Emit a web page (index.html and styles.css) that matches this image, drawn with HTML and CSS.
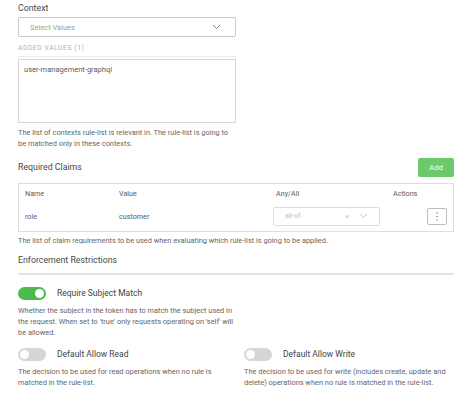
FILE: index.html
```html
<!DOCTYPE html>
<html>
<head>
<meta charset="utf-8">
<link rel="stylesheet" href="styles.css">
</head>
<body>
<div class="page">
  <div class="field-label ctx-label">Context</div>
  <div class="select">
    <span class="placeholder">Select Values</span>
    <svg class="chev" width="9" height="6" viewBox="0 0 9 6"><path d="M1 1l3.5 3.5L8 1" fill="none" stroke="#888" stroke-width="1"/></svg>
  </div>
  <div class="added-label">ADDED VALUES (1)</div>
  <div class="values-box">user-management-graphql</div>
  <p class="desc">The list of contexts rule-list is relevant in. The rule-list is going to be matched only in these contexts.</p>

  <div class="section-head">
    <div class="field-label claims-label">Required Claims</div>
    <button class="btn-add">Add</button>
  </div>
  <div class="claims">
    <div class="th c1">Name</div>
    <div class="th c2">Value</div>
    <div class="th c3">Any/All</div>
    <div class="th c4">Actions</div>
    <div class="td c1">role</div>
    <div class="td c2">customer</div>
    <div class="td c3">
      <div class="mini-select">
        <span class="mini-ph">all-of</span>
        <span class="mini-x">×</span>
        <svg class="mini-chev" width="9" height="6" viewBox="0 0 9 6"><path d="M1 1l3.5 3.5L8 1" fill="none" stroke="#c4c4c4" stroke-width="1"/></svg>
      </div>
    </div>
    <div class="td c4">
      <button class="kebab"><svg width="2" height="9" viewBox="0 0 2 9"><circle cx="1" cy="1" r="0.8" fill="#888"/><circle cx="1" cy="4.5" r="0.8" fill="#888"/><circle cx="1" cy="8" r="0.8" fill="#888"/></svg></button>
    </div>
  </div>
  <p class="desc claims-desc">The list of claim requirements to be used when evaluating which rule-list is going to be applied.</p>

  <div class="field-label enf-label">Enforcement Restrictions</div>
  <div class="rule"></div>

  <div class="toggles">
    <div class="toggle-cell">
      <div class="toggle-row">
        <span class="switch on"><span class="knob"></span></span>
        <span class="toggle-label">Require Subject Match</span>
      </div>
      <p class="desc">Whether the subject in the token has to match the subject used in the request. When set to 'true' only requests operating on 'self' will be allowed.</p>
    </div>
    <div class="toggle-cell"></div>
    <div class="toggle-cell">
      <div class="toggle-row">
        <span class="switch"><span class="knob"></span></span>
        <span class="toggle-label">Default Allow Read</span>
      </div>
      <p class="desc">The decision to be used for read operations when no rule is matched in the rule-list.</p>
    </div>
    <div class="toggle-cell">
      <div class="toggle-row">
        <span class="switch"><span class="knob"></span></span>
        <span class="toggle-label">Default Allow Write</span>
      </div>
      <p class="desc">The decision to be used for write (includes create, update and delete) operations when no rule is matched in the rule-list.</p>
    </div>
  </div>
</div>
</body>
</html>
```

FILE: styles.css
```css
* { box-sizing: border-box; }
html, body { margin: 0; padding: 0; background: #fff; }
body { font-family: Roboto, "Liberation Sans", sans-serif; color: #444; }
.page { width: 474px; padding: 0 20px 0 18px; }

.field-label { font-size: 8.8px; line-height: 14px; color: #484848; }
.ctx-label { margin-top: 1px; margin-bottom: 2px; }

.select {
  width: 218px; height: 20px; border: 1px solid #c9c9c9; border-radius: 2px;
  display: flex; align-items: center; justify-content: space-between;
  padding: 0 14px 0 11px;
}
.placeholder { font-size: 7.5px; color: #a0a0a0; }
.chev { display: block; }

.added-label {
  width: 218px; font-size: 6.5px; letter-spacing: 0.7px; color: #b0b0b0;
  line-height: 10px; margin-top: 6px; padding-bottom: 3px; border-bottom: 1px solid #ececec;
}
.values-box {
  width: 218px; height: 64px; margin-top: 2px; border: 1px solid #d6d6d6;
  padding: 5px 5px; font-size: 7.5px; line-height: 10px; color: #606060;
}
.desc { margin: 0; font-size: 7.4px; line-height: 11px; color: #666; }
.page > .desc { margin-top: 4px; width: 218px; }

.section-head {
  display: flex; justify-content: space-between; align-items: flex-start;
  margin-top: 9px; height: 19px;
}
.claims-label { margin-top: 2px; }
.btn-add {
  width: 36px; height: 19px; border: 0; border-radius: 2px; background: #6cc96c;
  color: #fff; font-family: inherit; font-size: 7.5px; padding: 0;
}
.claims {
  margin-top: 6px; border: 1px solid #dedede;
  display: grid; grid-template-columns: 100px 154px 120px 1fr;
  grid-template-rows: 17px 30px;
}
.th, .td { font-size: 7.2px; color: #5a5a5a; display: flex; align-items: center; }
.th { padding-top: 1px; }
.c1 { padding-left: 6px; }
.th.c3 { padding-left: 3px; }
.td.c4 { justify-content: flex-end; padding-right: 6px; }
.mini-select {
  width: 107px; height: 19px; border: 1px solid #dcdcdc; border-radius: 2px;
  display: flex; align-items: center; padding: 0 0 0 11px;
}
.mini-ph { font-size: 7px; color: #c2c2c2; width: 60px; }
.mini-x { font-size: 8px; color: #c4c4c4; width: 14px; }
.mini-chev { display: block; }
.kebab {
  width: 20px; height: 17px; border: 1px solid #bdbdbd; border-radius: 2px; background: #fff;
  display: flex; align-items: center; justify-content: center; padding: 0;
}
.kebab svg { display: block; }

.claims-desc { margin-top: 3px !important; width: auto !important; }
.enf-label { margin-top: 7px; }
.rule { height: 2px; background: #e2e2e2; margin-top: 6px; }

.toggles { display: grid; grid-template-columns: 218px 210px; column-gap: 8px; margin-top: 11px; }
.toggle-row { display: flex; align-items: center; height: 14px; }
.switch {
  width: 28px; height: 13px; border-radius: 7px; background: #d6d6d6; position: relative;
  flex: none;
}
.switch.on { background: #4cbb4c; }
.knob {
  position: absolute; top: 2px; left: 2px; width: 9px; height: 9px; border-radius: 50%; background: #fff;
}
.switch.on .knob { left: 17px; }
.toggle-label { margin-left: 11px; font-size: 8.5px; color: #444; }
.toggle-cell .desc { margin-top: 5px; }
.toggle-cell:nth-child(3), .toggle-cell:nth-child(4) { margin-top: 9px; }
.toggle-cell:nth-child(3) .desc, .toggle-cell:nth-child(4) .desc { margin-top: 5px; }
```
